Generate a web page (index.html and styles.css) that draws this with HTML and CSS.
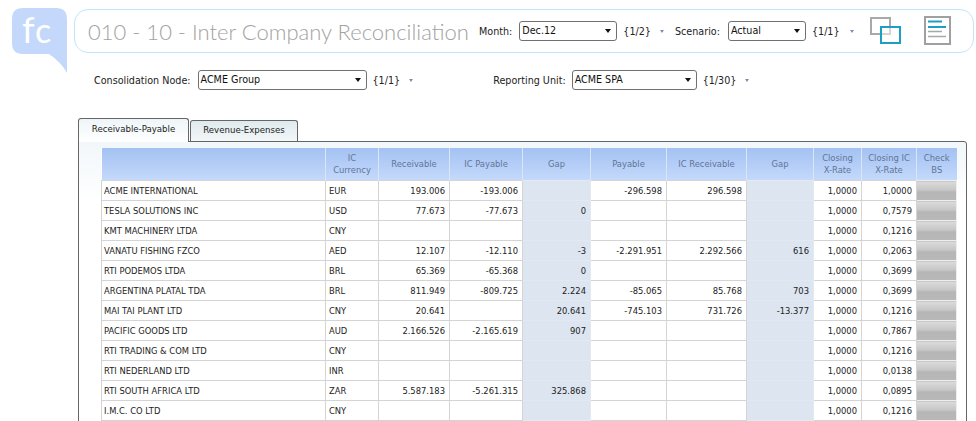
FILE: index.html
```html
<!DOCTYPE html>
<html lang="en">
<head>
  <meta charset="UTF-8">
  <title>Inter Company Reconciliation</title>
  <link rel="stylesheet" href="styles.css">
</head>
<body>
  <header class="top">
    <div class="logo">
      <svg class="logo-shape" width="57" height="65" viewBox="0 0 57 65">
        <path d="M12 0H45Q56 0 56 11V65Q50 54 38 46H12Q1 46 1 35V11Q1 0 12 0Z" fill="#c3d8fa"/>
      </svg>
      <span class="logo-f">f</span><span class="logo-c">c</span>
    </div>
    <div class="title-box">
      <h1>010 - 10 - Inter Company Reconciliation</h1>
      <span class="label">Month:</span>
      <div class="combo combo-month">Dec.12</div>
      <span class="count">{1/2}</span>
      <span class="drop"></span>
      <span class="label label-scenario">Scenario:</span>
      <div class="combo combo-scenario">Actual</div>
      <span class="count">{1/1}</span>
      <span class="drop drop-scenario"></span>
      <svg class="icon icon-copy" width="31" height="28" viewBox="0 0 31 28">
        <rect x="1" y="1" width="19" height="16" fill="none" stroke="#a9a9a9" stroke-width="2"/>
        <rect x="11" y="10" width="19" height="16" fill="#fff" fill-opacity="0.5" stroke="#1d9ec4" stroke-width="2"/>
      </svg>
      <svg class="icon icon-report" width="27" height="29" viewBox="0 0 27 29">
        <rect x="1" y="1" width="25" height="27" fill="#fff" stroke="#a0a0a0" stroke-width="2"/>
        <path d="M4 5.5H18M4 11H22" stroke="#1d9ec4" stroke-width="2"/>
        <path d="M4 15.5H18M4 20.5H22" stroke="#a8a8a8" stroke-width="1.5"/>
      </svg>
    </div>
  </header>

  <div class="filters">
    <span class="label">Consolidation Node:</span>
    <div class="combo combo-node">ACME Group</div>
    <span class="count">{1/1}</span>
    <span class="drop"></span>
    <span class="label label-unit">Reporting Unit:</span>
    <div class="combo combo-unit">ACME SPA</div>
    <span class="count">{1/30}</span>
    <span class="drop"></span>
  </div>

  <div class="tabs">
    <div class="tab tab-active">Receivable-Payable</div>
    <div class="tab">Revenue-Expenses</div>
  </div>

  <div class="panel">
    <table class="grid">
      <colgroup>
        <col class="c-name"><col class="c-cur"><col class="c-rec"><col class="c-pay">
        <col class="c-gap"><col class="c-pay2"><col class="c-rec2"><col class="c-gap2">
        <col class="c-x"><col class="c-xic"><col class="c-chk">
      </colgroup>
      <thead>
        <tr>
          <th></th>
          <th>IC<br>Currency</th>
          <th>Receivable</th>
          <th>IC Payable</th>
          <th>Gap</th>
          <th>Payable</th>
          <th>IC Receivable</th>
          <th>Gap</th>
          <th>Closing<br>X-Rate</th>
          <th>Closing IC<br>X-Rate</th>
          <th>Check<br>BS</th>
        </tr>
      </thead>
      <tbody>
        <tr><td class="name">ACME INTERNATIONAL</td><td>EUR</td><td class="num">193.006</td><td class="num">-193.006</td><td class="num gap"></td><td class="num">-296.598</td><td class="num">296.598</td><td class="num gap"></td><td class="num">1,0000</td><td class="num">1,0000</td><td class="check"></td></tr>
        <tr><td class="name">TESLA SOLUTIONS INC</td><td>USD</td><td class="num">77.673</td><td class="num">-77.673</td><td class="num gap">0</td><td class="num"></td><td class="num"></td><td class="num gap"></td><td class="num">1,0000</td><td class="num">0,7579</td><td class="check"></td></tr>
        <tr><td class="name">KMT MACHINERY LTDA</td><td>CNY</td><td class="num"></td><td class="num"></td><td class="num gap"></td><td class="num"></td><td class="num"></td><td class="num gap"></td><td class="num">1,0000</td><td class="num">0,1216</td><td class="check"></td></tr>
        <tr><td class="name">VANATU FISHING FZCO</td><td>AED</td><td class="num">12.107</td><td class="num">-12.110</td><td class="num gap">-3</td><td class="num">-2.291.951</td><td class="num">2.292.566</td><td class="num gap">616</td><td class="num">1,0000</td><td class="num">0,2063</td><td class="check"></td></tr>
        <tr><td class="name">RTI PODEMOS LTDA</td><td>BRL</td><td class="num">65.369</td><td class="num">-65.368</td><td class="num gap">0</td><td class="num"></td><td class="num"></td><td class="num gap"></td><td class="num">1,0000</td><td class="num">0,3699</td><td class="check"></td></tr>
        <tr><td class="name">ARGENTINA PLATAL TDA</td><td>BRL</td><td class="num">811.949</td><td class="num">-809.725</td><td class="num gap">2.224</td><td class="num">-85.065</td><td class="num">85.768</td><td class="num gap">703</td><td class="num">1,0000</td><td class="num">0,3699</td><td class="check"></td></tr>
        <tr><td class="name">MAI TAI PLANT LTD</td><td>CNY</td><td class="num">20.641</td><td class="num"></td><td class="num gap">20.641</td><td class="num">-745.103</td><td class="num">731.726</td><td class="num gap">-13.377</td><td class="num">1,0000</td><td class="num">0,1216</td><td class="check"></td></tr>
        <tr><td class="name">PACIFIC GOODS LTD</td><td>AUD</td><td class="num">2.166.526</td><td class="num">-2.165.619</td><td class="num gap">907</td><td class="num"></td><td class="num"></td><td class="num gap"></td><td class="num">1,0000</td><td class="num">0,7867</td><td class="check"></td></tr>
        <tr><td class="name">RTI TRADING &amp; COM LTD</td><td>CNY</td><td class="num"></td><td class="num"></td><td class="num gap"></td><td class="num"></td><td class="num"></td><td class="num gap"></td><td class="num">1,0000</td><td class="num">0,1216</td><td class="check"></td></tr>
        <tr><td class="name">RTI NEDERLAND LTD</td><td>INR</td><td class="num"></td><td class="num"></td><td class="num gap"></td><td class="num"></td><td class="num"></td><td class="num gap"></td><td class="num">1,0000</td><td class="num">0,0138</td><td class="check"></td></tr>
        <tr><td class="name">RTI SOUTH AFRICA LTD</td><td>ZAR</td><td class="num">5.587.183</td><td class="num">-5.261.315</td><td class="num gap">325.868</td><td class="num"></td><td class="num"></td><td class="num gap"></td><td class="num">1,0000</td><td class="num">0,0895</td><td class="check"></td></tr>
        <tr><td class="name">I.M.C. CO LTD</td><td>CNY</td><td class="num"></td><td class="num"></td><td class="num gap"></td><td class="num"></td><td class="num"></td><td class="num gap"></td><td class="num">1,0000</td><td class="num">0,1216</td><td class="check"></td></tr>
      </tbody>
    </table>
  </div>
</body>
</html>
```

FILE: styles.css
```css
html, body {
  height: 100%;
  margin: 0;
  overflow: hidden;
}
body {
  font-family: "DejaVu Sans", sans-serif;
  font-size: 9.6px;
  color: #222;
  background: #fff;
}
.top {
  display: flex;
  align-items: flex-start;
  padding: 8px 0 0 11px;
}
.logo {
  position: relative;
  width: 57px;
  height: 65px;
  flex: none;
  color: #fff;
}
.logo-shape {
  display: block;
}
.logo-f, .logo-c {
  position: absolute;
  font-family: "Lato", sans-serif;
  line-height: 1;
}
.logo-f {
  left: 11px;
  top: 3px;
  font-size: 36px;
}
.logo-c {
  left: 24px;
  top: 5px;
  font-size: 34px;
}
.title-box {
  flex: none;
  width: 900px;
  height: 44px;
  margin: 1px 0 0 6px;
  box-sizing: border-box;
  display: flex;
  align-items: center;
  padding-left: 13px;
  border: 1px solid #bfe6f8;
  border-radius: 14px;
}
h1 {
  margin: 0 10px 0 0;
  width: 381px;
  flex: none;
  font-family: "Lato", sans-serif;
  font-size: 22px;
  font-weight: 300;
  white-space: nowrap;
  color: #a2a2a2;
}
.label {
  flex: none;
}
.combo {
  position: relative;
  flex: none;
  box-sizing: border-box;
  height: 20px;
  line-height: 18px;
  padding-left: 2px;
  margin: 0 5px 0 6px;
  border: 1px solid #707070;
  border-radius: 3px;
  background: #fff;
  color: #111;
}
.combo::after {
  content: "";
  position: absolute;
  right: 5px;
  top: 7px;
  border: 3.5px solid transparent;
  border-top: 4px solid #111;
  border-bottom: 0;
}
.combo-month { width: 98px; margin-left: 7px; }
.combo-scenario { width: 78px; margin-left: 8px; }
.combo-node { width: 169px; margin-left: 7px; }
.combo-unit { width: 125px; }
.count {
  flex: none;
  margin-left: 1px;
}
.drop {
  flex: none;
  margin-left: 9px;
  border: 2.5px solid transparent;
  border-top: 3px solid #7c8fb5;
  border-bottom: 0;
}
.drop-scenario {
  margin-left: 10px;
}
.label-scenario {
  margin-left: 11px;
}
.icon {
  flex: none;
}
.icon-copy {
  margin: 0 0 0 16px;
}
.icon-report {
  margin: 0 0 1px 23px;
}
.filters {
  display: flex;
  align-items: center;
  margin-top: -3px;
  padding-left: 94px;
  height: 20px;
}
.label-unit {
  margin-left: 80px;
}
.tabs {
  display: flex;
  align-items: flex-end;
  gap: 1px;
  height: 24px;
  margin: 27px 0 0 78px;
  font-size: 8.6px;
}
.tab {
  box-sizing: border-box;
  width: 108px;
  height: 21px;
  line-height: 19px;
  text-align: center;
  border: 1px solid #666;
  border-bottom: 0;
  border-radius: 3px 3px 0 0;
  background: linear-gradient(#dfeaee, #f3f7f8);
}
.tab-active {
  width: 111px;
  height: 24px;
  line-height: 20px;
  margin-bottom: -1px;
  background: linear-gradient(#eef5f8, #fff);
  position: relative;
}
.panel {
  width: 889px;
  height: 300px;
  margin-left: 78px;
  box-sizing: border-box;
  padding: 6px 0 0 22px;
  border: 1px solid #666;
  border-radius: 0 3px 0 0;
  background: linear-gradient(#f1f7fa, #fff 60px);
}
.grid {
  table-layout: fixed;
  width: 855px;
  border-collapse: collapse;
  font-size: 8.4px;
  background: #fff;
}
.c-name { width: 224px; }
.c-cur { width: 53px; }
.c-rec { width: 71px; }
.c-pay { width: 73px; }
.c-gap { width: 68px; }
.c-pay2 { width: 76px; }
.c-rec2 { width: 80px; }
.c-gap2 { width: 67px; }
.c-x { width: 48px; }
.c-xic { width: 55px; }
.c-chk { width: 40px; }
.grid th {
  height: 32px;
  padding: 0;
  font-weight: normal;
  line-height: 12px;
  color: #5f7596;
  background: linear-gradient(#a3c1f2, #c4d9fb);
  border-left: 1px solid #dbe5f5;
}
.grid th:first-child {
  border-left: 0;
}
.grid td {
  height: 19px;
  padding: 0 4px 0 3px;
  border: 1px solid #d4d4d4;
  white-space: nowrap;
  color: #222;
}
.grid .name {
  padding-left: 2px;
}
.grid .gap {
  background: #dde5f1;
  border-color: #e3e9f3;
}
.grid .num {
  text-align: right;
}
.grid .check {
  padding: 0;
  background: linear-gradient(#dcdcdc, #c6c6c6 45%, #b6b6b6 55%, #b8b8b8);
  border-color: #eee;
}
```
